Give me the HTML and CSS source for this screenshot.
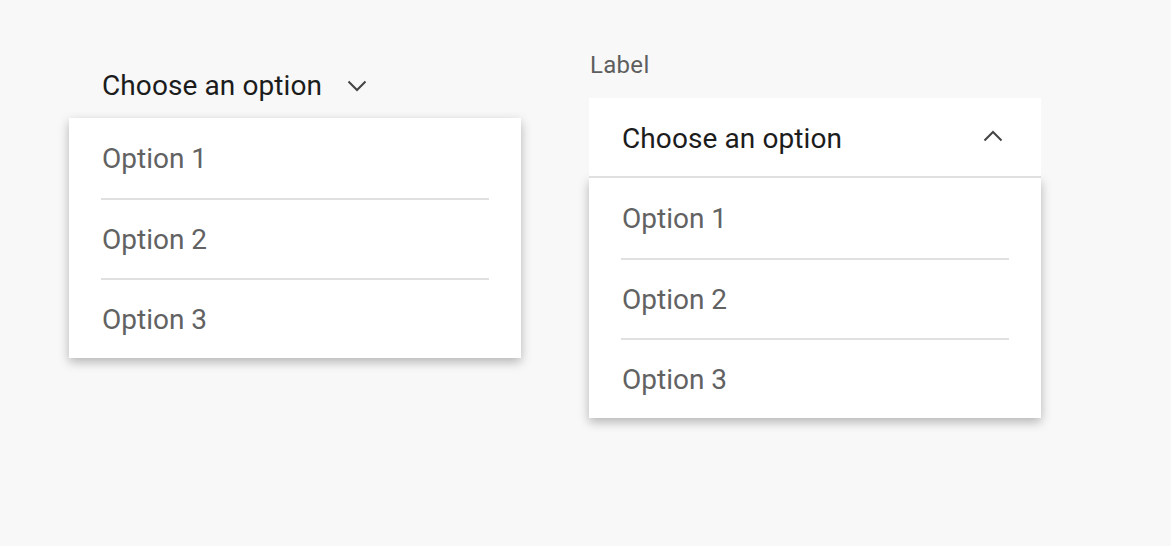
FILE: index.html
```html
<!DOCTYPE html>
<html lang="en">
<head>
<meta charset="utf-8">
<title>Dropdowns</title>
<link rel="stylesheet" href="styles.css">
</head>
<body>
<div class="page">
  <div class="dropdown dropdown--inline">
    <div class="inline-trigger">
      <span class="trigger-text">Choose an option</span>
      <svg class="chevron" width="20" height="12" viewBox="0 0 20 12" aria-hidden="true">
        <path d="M1.5 1.5 L10 10 L18.5 1.5" fill="none" stroke="#444" stroke-width="2"/>
      </svg>
    </div>
    <ul class="menu">
      <li class="item">Option 1</li>
      <li class="item">Option 2</li>
      <li class="item">Option 3</li>
    </ul>
  </div>

  <div class="dropdown dropdown--field">
    <div class="label">Label</div>
    <div class="field">
      <span class="trigger-text">Choose an option</span>
      <svg class="chevron" width="20" height="12" viewBox="0 0 20 12" aria-hidden="true">
        <path d="M1.5 10.5 L10 2 L18.5 10.5" fill="none" stroke="#444" stroke-width="2"/>
      </svg>
    </div>
    <ul class="menu menu--attached">
      <li class="item">Option 1</li>
      <li class="item">Option 2</li>
      <li class="item">Option 3</li>
    </ul>
  </div>
</div>
</body>
</html>
```

FILE: styles.css
```css
html, body {
  margin: 0;
  padding: 0;
  background: #f8f8f8;
}

body {
  font-family: Roboto, "Liberation Sans", Arial, sans-serif;
  color: #1c1c1c;
  min-height: 546px;
}

.page {
  display: flex;
  gap: 68px;
  padding: 44px 0 60px 69px;
  align-items: flex-start;
}

.dropdown {
  width: 452px;
  display: flex;
  flex-direction: column;
}

.inline-trigger {
  height: 74px;
  display: flex;
  align-items: center;
  gap: 25px;
  padding-left: 33px;
  padding-top: 6px;
  box-sizing: border-box;
}

.trigger-text {
  font-size: 28px;
  line-height: 1;
  color: #1c1c1c;
  letter-spacing: 0.1px;
  padding-top: 3px;
}

.inline-trigger .chevron {
  margin-top: 4px;
}

.menu {
  list-style: none;
  margin: 0;
  padding: 0;
  background: #ffffff;
  box-shadow: 0 4px 10px rgba(0, 0, 0, 0.28);
}

.item {
  height: 80px;
  margin: 0 32px;
  display: flex;
  align-items: center;
  padding-left: 1px;
  padding-top: 2px;
  font-size: 28px;
  line-height: 1;
  color: #626262;
  box-sizing: border-box;
}

.item + .item {
  border-top: 2px solid #e0e0e0;
}

.label {
  font-size: 24px;
  line-height: 1;
  color: #5e5e5e;
  height: 54px;
  padding-left: 1px;
  padding-top: 9px;
  box-sizing: border-box;
  letter-spacing: 0.3px;
}

.field {
  height: 80px;
  background: #ffffff;
  border-bottom: 2px solid #e0e0e0;
  display: flex;
  align-items: center;
  justify-content: space-between;
  padding: 0 38px 0 33px;
  box-sizing: border-box;
  position: relative;
  z-index: 1;
}

.field .chevron {
  margin-bottom: 2px;
}

.menu--attached {
  margin-top: 0;
}
```
